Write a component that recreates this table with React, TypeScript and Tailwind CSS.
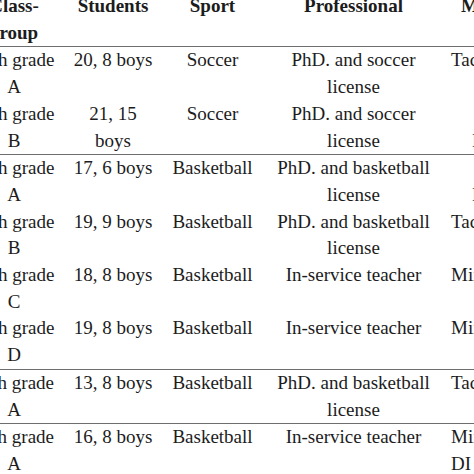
import React from 'react';

interface Row {
  group: string[];
  students: string[];
  sport: string;
  professional: string[];
  method: React.ReactNode;
  ruled?: boolean;
}

const ROWS: Row[] = [
  { group: ['10th grade', 'A'], students: ['20, 8 boys'], sport: 'Soccer', professional: ['PhD. and soccer', 'license'], method: <>Tactical games</> },
  { group: ['10th grade', 'B'], students: ['21, 15', 'boys'], sport: 'Soccer', professional: ['PhD. and soccer', 'license'], method: <><span className="pl-[60px]">Direct</span><br /><span className="pl-[21px]">Instruction</span></>, ruled: true },
  { group: ['10th grade', 'A'], students: ['17, 6 boys'], sport: 'Basketball', professional: ['PhD. and basketball', 'license'], method: <><span className="pl-[60px]">Direct</span><br /><span className="pl-[21px]">Instruction</span></> },
  { group: ['10th grade', 'B'], students: ['19, 9 boys'], sport: 'Basketball', professional: ['PhD. and basketball', 'license'], method: <>Tactical games</> },
  { group: ['10th grade', 'C'], students: ['18, 8 boys'], sport: 'Basketball', professional: ['In-service teacher'], method: <>Mixed model</> },
  { group: ['10th grade', 'D'], students: ['19, 8 boys'], sport: 'Basketball', professional: ['In-service teacher'], method: <>Mixed model</>, ruled: true },
  { group: ['11th grade', 'A'], students: ['13, 8 boys'], sport: 'Basketball', professional: ['PhD. and basketball', 'license'], method: <>Tactical games</>, ruled: true },
  { group: ['11th grade', 'A'], students: ['16, 8 boys'], sport: 'Basketball', professional: ['In-service teacher'], method: <>Mixed model<br />DI and TGfU</> },
];

const lines = (items: string[]) =>
  items.map((t, i) => (
    <React.Fragment key={i}>
      {i > 0 && <br />}
      {t}
    </React.Fragment>
  ));

export default function App() {
  return (
    <div className="w-[474px] h-[474px] overflow-hidden bg-white">
      <table
        className="w-[700px] table-fixed border-collapse ml-[-32px] mt-[-7px] text-[19px] leading-[26.7px] text-[#1c1c1c] whitespace-nowrap"
        style={{ fontFamily: '"Liberation Serif", "Times New Roman", serif' }}
      >
        <colgroup>
          <col className="w-[92px]" />
          <col className="w-[106px]" />
          <col className="w-[93px]" />
          <col className="w-[189px]" />
          <col className="w-[220px]" />
        </colgroup>
        <thead>
          <tr className="border-b-[1.5px] border-[#6e6e6e] font-bold align-top">
            <th className="p-0 text-center">Class-<br />group</th>
            <th className="p-0 text-center">Students</th>
            <th className="p-0 text-center">Sport</th>
            <th className="p-0 text-center">Professional</th>
            <th className="p-0 pl-[13px] text-left">Method</th>
          </tr>
        </thead>
        <tbody>
          {ROWS.map((row, index) => (
            <tr
              key={index}
              className={`align-top h-[53.4px] ${row.ruled ? 'border-b-[1.5px] border-[#6e6e6e]' : ''}`}
            >
              <td className="p-0 text-center">{lines(row.group)}</td>
              <td className="p-0 text-center">{lines(row.students)}</td>
              <td className="p-0 text-center">{row.sport}</td>
              <td className="p-0 text-center">{lines(row.professional)}</td>
              <td className="p-0 pl-[3px] text-left">{row.method}</td>
            </tr>
          ))}
        </tbody>
      </table>
    </div>
  );
}
